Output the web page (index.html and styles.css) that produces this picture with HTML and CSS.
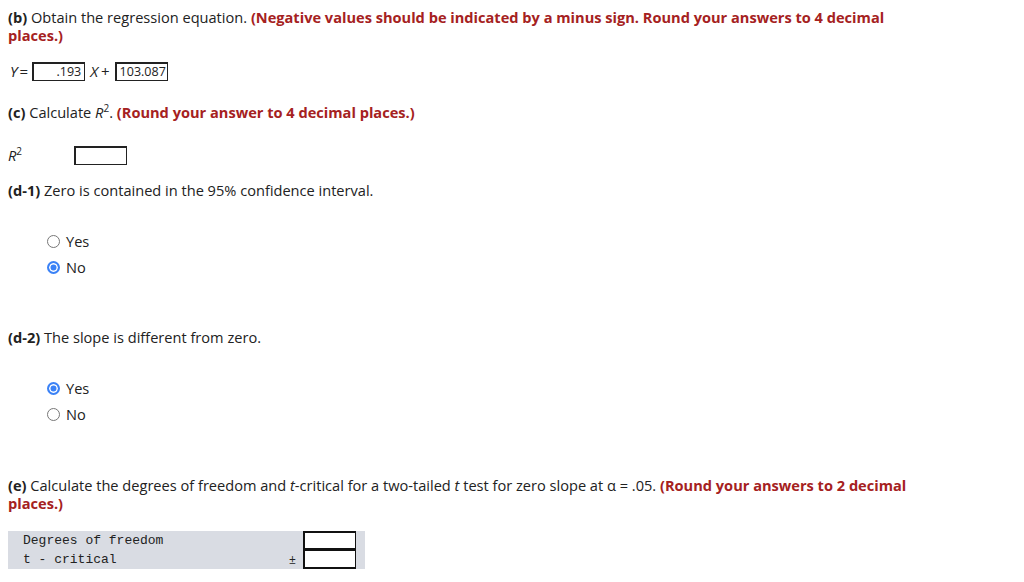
FILE: index.html
```html
<!DOCTYPE html>
<html>
<head>
<meta charset="utf-8">
<link rel="stylesheet" href="styles.css">
</head>
<body>
<div class="page">
  <p class="q q-b"><b>(b)</b> Obtain the regression equation. <span class="note">(Negative values should be indicated by a minus sign. Round your answers to 4 decimal<br>places.)</span></p>
  <div class="eq">
    <i class="var">Y</i><span class="op">=</span><span class="box right">.193</span><i class="var x">X</i><span class="op plus">+</span><span class="box">103.087</span>
  </div>

  <p class="q q-c"><b>(c)</b> Calculate <i class="var">R</i><sup>2</sup>. <span class="note">(Round your answer to 4 decimal places.)</span></p>
  <div class="r2row">
    <span class="r2"><i class="var">R</i><sup>2</sup></span><span class="box empty"></span>
  </div>

  <p class="q q-d1"><b>(d-1)</b> Zero is contained in the 95% confidence interval.</p>
  <div class="radios r1">
    <div class="radio"><span class="dot"></span>Yes</div>
    <div class="radio"><span class="dot on"></span>No</div>
  </div>

  <p class="q q-d2"><b>(d-2)</b> The slope is different from zero.</p>
  <div class="radios r2grp">
    <div class="radio"><span class="dot on"></span>Yes</div>
    <div class="radio"><span class="dot"></span>No</div>
  </div>

  <p class="q q-e"><b>(e)</b> Calculate the degrees of freedom and <i>t</i>-critical for a two-tailed <i>t</i> test for zero slope at α = .05. <span class="note">(Round your answers to 2 decimal<br>places.)</span></p>
  <div class="tbl">
    <div class="trow"><span class="lbl">Degrees of freedom</span><span class="pm"></span><span class="cell"></span></div>
    <div class="trow"><span class="lbl">t - critical</span><span class="pm">±</span><span class="cell"></span></div>
  </div>
</div>
</body>
</html>
```

FILE: styles.css
```css
html, body { margin: 0; padding: 0; background: #fff; }
body {
  font-family: "Open Sans", "Liberation Sans", sans-serif;
  font-size: 14.6px;
  color: #222;
}
.page { padding: 8px 8px 0 8px; width: 1000px; }
.q { margin: 0; line-height: 18px; white-space: nowrap; }
.q b { font-weight: 700; }
.note { color: #a52121; font-weight: 700; }
.var { font-style: italic; }
sup { font-size: 10px; line-height: 0; vertical-align: 6px; }

.eq { display: flex; align-items: center; height: 20px; margin-top: 17px; padding-left: 2px; font-size: 15px; }
.eq .op { margin: 0 4px 0 2px; }
.eq .x { margin-left: 5px; }
.eq .plus { margin: 0 5px 0 3px; }
.box {
  display: inline-block; box-sizing: border-box; width: 53px; height: 19px;
  border: 1px solid #222; border-top-width: 2px; border-left-width: 2px;
  font-size: 12.5px; line-height: 15px; padding: 0 3px; background: #fff;
}
.box.right { text-align: right; }

.q-c { margin-top: 22px; }
.r2row { display: flex; align-items: center; margin-top: 24px; height: 20px; }
.r2 { width: 66px; }
.q-d1 { margin-top: 16px; }
.radios { display: flex; flex-direction: column; gap: 8px; padding-left: 39px; }
.r1 { margin-top: 33px; }
.radio { display: flex; align-items: center; height: 18px; }
.dot {
  box-sizing: border-box; width: 13px; height: 13px; border-radius: 50%;
  border: 1px solid #777; margin-right: 6px; background: #fff;
}
.dot.on { border: 2px solid #3b82f6; box-shadow: inset 0 0 0 1.5px #fff; background: #3b82f6; }
.q-d2 { margin-top: 52px; }
.r2grp { margin-top: 33px; }
.q-e { margin-top: 53px; }
.tbl { margin-top: 19px; width: 357px; background: #d9dce3; }
.trow { display: flex; align-items: center; height: 19px; }
.lbl { font-family: "Liberation Mono", monospace; font-size: 13px; padding-left: 15px; width: 266px; }
.pm { width: 14px; font-size: 12px; }
.cell { box-sizing: border-box; width: 53px; height: 19px; border: 2px solid #111; border-right-width: 1px; background: #fff; }
.trow + .trow .cell { border-top-width: 1px; }
```
